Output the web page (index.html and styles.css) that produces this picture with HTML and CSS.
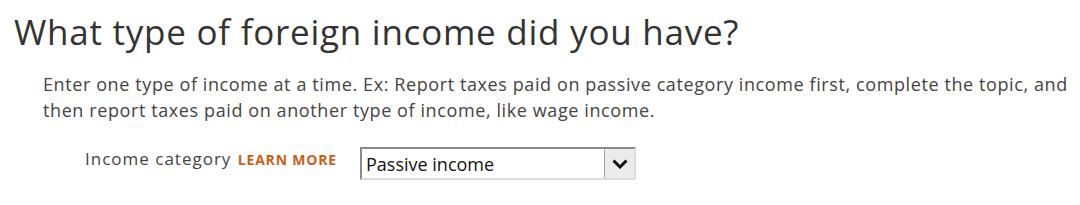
FILE: index.html
```html
<!DOCTYPE html>
<html lang="en">
<head>
  <meta charset="UTF-8" />
  <title>Foreign Income</title>
  <link rel="stylesheet" href="styles.css">
</head>
<body>
  <div class="page">
    <h1>What type of foreign income did you have?</h1>
    <p class="intro">Enter one type of income at a time. Ex: Report taxes paid on passive category income first, complete the topic, and then report taxes paid on another type of income, like wage income.</p>
    <div class="field-row">
      <label for="category">Income category <a href="#" class="learn-more">LEARN MORE</a></label>
      <div class="select-box" id="category">
        <span class="select-value">Passive income</span>
        <span class="select-arrow">
          <svg width="16" height="10" viewBox="0 0 16 10">
            <path d="M1.5 1.5 L8 8 L14.5 1.5" fill="none" stroke="#111" stroke-width="3"/>
          </svg>
        </span>
      </div>
    </div>
  </div>
</body>
</html>
```

FILE: styles.css
```css
body {
  margin: 0;
  padding: 0;
  background: #fff;
  font-family: "Open Sans", sans-serif;
  color: #333;
}

.page {
  padding: 10px 8px 0 14px;
}

h1 {
  margin: 0;
  font-size: 35px;
  font-weight: 400;
  line-height: 44px;
  letter-spacing: 0.75px;
  color: #333;
}

.intro {
  margin: 17px 0 0 29px;
  font-size: 18px;
  line-height: 26px;
  letter-spacing: 0.6px;
  color: #444;
}

.field-row {
  display: flex;
  align-items: flex-start;
  margin: 24px 0 0 71px;
}

.field-row label {
  font-size: 17px;
  line-height: 24px;
  letter-spacing: 1px;
  color: #444;
  width: 275px;
}

.learn-more {
  color: #c8601a;
  font-size: 14px;
  font-weight: bold;
  letter-spacing: 0.8px;
  text-decoration: none;
  margin-left: 1px;
}

.select-box {
  display: flex;
  align-items: stretch;
  width: 272px;
  height: 29px;
  border: 2px solid #8a8a8a;
  border-right-color: #dcdcdc;
  border-bottom-color: #dcdcdc;
  background: #fff;
}

.select-value {
  flex: 1;
  font-size: 18px;
  line-height: 27px;
  padding: 2px 0 0 4px;
  color: #111;
}

.select-arrow {
  width: 29px;
  display: flex;
  align-items: center;
  justify-content: center;
  background: #ececec;
  border-left: 1px solid #a8a8a8;
}
```
